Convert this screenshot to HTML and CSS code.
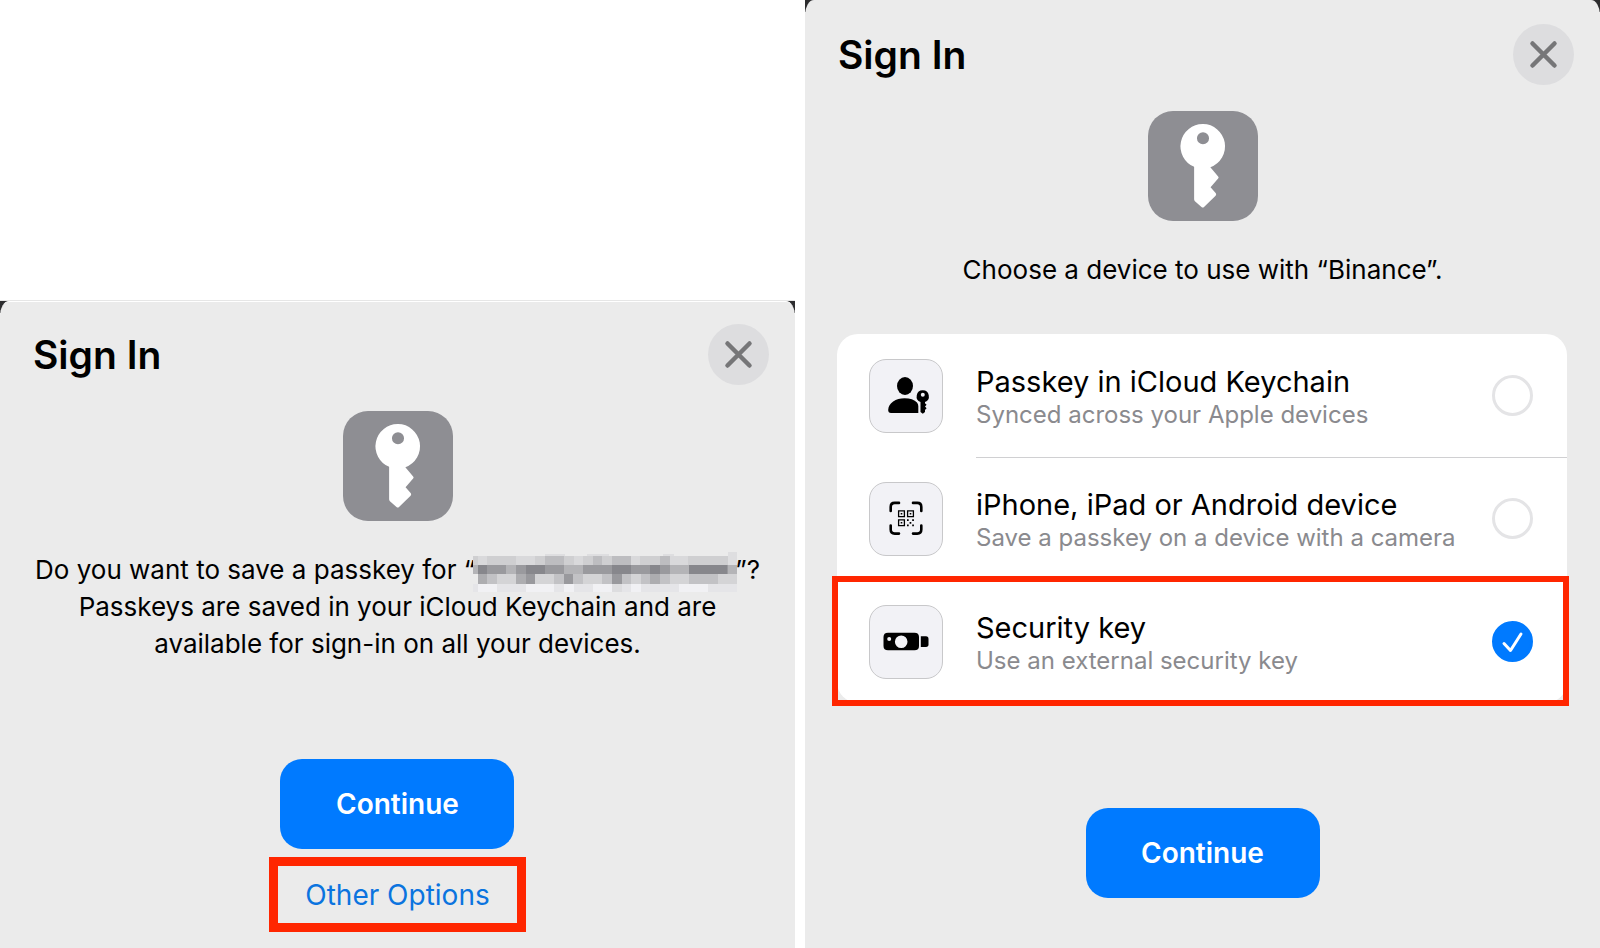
FILE: index.html
```html
<!DOCTYPE html>
<html lang="en">
<head>
<meta charset="utf-8">
<title>Sign In</title>
<link rel="stylesheet" href="styles.css">
</head>
<body>
<svg class="defs" aria-hidden="true">
  <symbol id="key" viewBox="0 0 109 109">
    <path fill-rule="evenodd" stroke-linejoin="round" d="M54.5 13a22 22 0 0 1 7.3 42.7L69.5 65Q70.5 66 69.5 67L62 75.5L67.2 81.5Q68 82.7 67 84L55.5 95.2Q54.3 96.2 53 95.2L46.5 89.5Q45.7 88.6 45.7 87.5V55.3A22 22 0 0 1 54.5 13ZM54.5 21a6 6 0 1 0 0 12a6 6 0 0 0 0-12Z"/>
  </symbol>
  <symbol id="close" viewBox="0 0 61 61">
    <path d="M19.500 19.500L41.500 41.500M41.500 19.500L19.500 41.500" fill="none" stroke="currentColor" stroke-width="4.500" stroke-linecap="round"/>
  </symbol>
</svg>
<main class="page">
  <section class="screen screen-save">
    <div class="sheet">
      <header class="sheet-header">
        <h1>Sign In</h1>
        <button class="close" type="button" aria-label="Close"><svg><use href="#close"/></svg></button>
      </header>
      <div class="key-tile"><svg><use href="#key"/></svg></div>
      <p class="message">Do you want to save a passkey for “<svg class="mosaic" viewBox="0 0 264 40" role="img" aria-label="Hidden account" shape-rendering="crispEdges">
        <path fill="#cfcfd1" d="M0 4H264V13H0Z"/>
        <path fill="#d9d9db" d="M5 4h9v9H5zM43 4h19v9H43zM101 4h9v9h-9zM158 4h9v9h-9zM197 4h18v9h-18z"/>
        <path fill="#bdbdc0" d="M72 4h9v9h-9zM81 4h10v9H81zM120 4h9v9h-9zM139 4h19v9h-19zM187 4h10v9h-10z"/>
        <path fill="#dedee0" d="M72 2h20v2H72zM114 2h22v2h-22zM190 2h11v2h-11zM255 0h9v13h-9z"/>
        <path fill="#9a9a9e" d="M0 13H264V22H0Z"/>
        <path fill="#87878c" d="M5 13h9v9H5zM53 13h19v9H53zM139 13h19v9h-19zM177 13h10v9h-10zM216 13h38v9h-38z"/>
        <path fill="#b4b4b7" d="M0 13h5v9H0zM33 13h10v9H33zM91 13h19v9H91zM197 13h19v9h-19zM255 13h9v9h-9z"/>
        <path fill="#c2c2c5" d="M5 22H255V32H5Z"/>
        <path fill="#d4d4d6" d="M24 22h19v10H24zM62 22h19v10H62zM110 22h19v10h-19zM158 22h10v10h-10zM197 22h19v10h-19zM245 22h19v10h-19z"/>
        <path fill="#99999d" d="M53 22h9v10h-9zM91 22h9v10h-9zM139 22h10v10h-10z"/>
        <path fill="#adadb0" d="M5 22h9v10H5zM43 22h10v10H43zM177 22h10v10h-10z"/>
        <path fill="#e5e5e8" d="M0 32H264V40H0Z"/>
        <path fill="#f1f1f4" d="M5 32h19v8H5zM53 32h28v8H53zM91 32h10v8H91zM120 32h19v8h-19zM158 32h10v8h-10zM206 32h29v8h-29z"/>
        <path fill="#dddddf" d="M139 32h10v8h-10z"/>
      </svg>”?<br>Passkeys are saved in your iCloud Keychain and are<br>available for sign-in on all your devices.</p>
      <div class="actions">
        <button class="primary" type="button">Continue</button>
        <div class="callout callout-link"><button class="link" type="button">Other Options</button></div>
      </div>
    </div>
  </section>

  <section class="screen screen-choose">
    <form class="sheet">
      <header class="sheet-header">
        <h1>Sign In</h1>
        <button class="close" type="button" aria-label="Close"><svg><use href="#close"/></svg></button>
      </header>
      <div class="key-tile"><svg><use href="#key"/></svg></div>
      <p class="message">Choose a device to use with “Binance”.</p>
      <div class="options">
        <label class="option">
          <span class="option-icon"><svg viewBox="0 0 74 74">
            <ellipse cx="36" cy="27" rx="8" ry="9"/>
            <path d="M19.2 51C19.2 44 27 39.3 35.5 39.3C41 39.3 45.500 40.800 48 43.500Q49.300 45 49.300 47V54H22Q19.200 54 19.200 51Z"/>
            <path fill-rule="evenodd" d="M53.800 31.300a6 6 0 0 1 2.200 11.600V44.200L57.600 45.700L56 47.500L57.600 49.200L56 51V53L53.800 54.800L51.500 53V42.900A6 6 0 0 1 53.800 31.300ZM53.800 33.700a2 2 0 1 0 0 4a2 2 0 0 0 0-4Z"/>
          </svg></span>
          <span class="option-text"><span class="option-title">Passkey in iCloud Keychain</span><span class="option-note">Synced across your Apple devices</span></span>
          <span class="radio"><input type="radio" name="device"></span>
        </label>
        <label class="option">
          <span class="option-icon"><svg viewBox="0 0 74 74">
            <path fill="none" stroke="#000" stroke-width="2.600" stroke-linecap="round" d="M21.700 29V24.900Q21.700 20.900 25.700 20.900H30M44 20.900H48.300Q52.300 20.900 52.300 24.900V29M52.300 43.500V47.600Q52.300 51.600 48.300 51.600H44M30 51.600H25.700Q21.700 51.600 21.700 47.600V43.500"/>
            <path fill="none" stroke="#000" stroke-width="1.300" d="M29.600 28.900h5.800v5.800h-5.800zM38.600 28.900h5.800v5.800h-5.800zM29.600 37.900h5.800v5.800h-5.800z"/>
            <path d="M31.700 31h1.600v1.600h-1.600zM40.700 31h1.600v1.600h-1.600zM31.700 40h1.600v1.600h-1.600zM38 37.300h1.700v1.700H38zM43.200 37.300h1.700v1.700h-1.700zM40.600 40h1.700v1.700h-1.700zM38 42.600h1.700v1.700H38zM43.200 42.600h1.700v1.700h-1.700z"/>
          </svg></span>
          <span class="option-text"><span class="option-title">iPhone, iPad or Android device</span><span class="option-note">Save a passkey on a device with a camera</span></span>
          <span class="radio"><input type="radio" name="device"></span>
        </label>
        <label class="option">
          <span class="option-icon"><svg viewBox="0 0 74 74">
            <path fill-rule="evenodd" d="M19 27.700H45.500Q50 27.700 50 32V41Q50 45.300 45.500 45.300H19Q14.500 45.300 14.500 41V32Q14.500 27.700 19 27.700ZM32.200 30.400a6.300 6.300 0 1 0 0 12.600a6.300 6.300 0 0 0 0-12.600ZM20.200 32a2 2 0 1 0 0 4a2 2 0 0 0 0-4Z"/>
            <path d="M51.800 31.300H57Q59.500 31.300 59.500 34V39.300Q59.500 42 57 42H51.800Z"/>
          </svg></span>
          <span class="option-text"><span class="option-title">Security key</span><span class="option-note">Use an external security key</span></span>
          <span class="radio"><input type="radio" name="device" checked><svg viewBox="0 0 41 41" aria-hidden="true"><path d="M12 22.500L18.500 29.500L29 13" fill="none" stroke="#fff" stroke-width="3" stroke-linecap="round" stroke-linejoin="round"/></svg></span>
          <span class="callout callout-row"></span>
        </label>
      </div>
      <div class="actions"><button class="primary" type="button">Continue</button></div>
    </form>
  </section>
</main>
</body>
</html>
```
FILE: styles.css
```css
* { box-sizing: border-box; }

body {
  margin: 0;
  background: #fff;
  color: #000;
  font-family: Inter, "Liberation Sans", sans-serif;
}

button {
  padding: 0;
  border: 0;
  background: none;
  font: inherit;
  cursor: pointer;
}

svg { display: block; }

.defs {
  position: absolute;
  width: 0;
  height: 0;
}

.page {
  display: grid;
  grid-template-columns: 1fr 1fr;
  gap: 10px;
  min-height: 100vh;
}

/* The dark strip shows behind the rounded corners of the sheet. */
.screen {
  display: flex;
  background: linear-gradient(#2c2c2e 0 12px, #ebebeb 12px);
}

.screen-save {
  align-self: end;
  border-top: 1px solid #e6e6e6;
}

.sheet {
  flex: 1;
  display: flex;
  flex-direction: column;
  align-items: center;
  padding: 24px 26px 16px 33px;
  border-radius: 9px 9px 0 0 / 15px 15px 0 0;
  background: #ebebeb;
}

.screen-save .sheet {
  border-top: 1px solid #fff;
  padding-top: 22px;
}

.sheet-header {
  align-self: stretch;
  display: flex;
  justify-content: space-between;
  align-items: center;
}

h1 {
  margin: 0;
  font-size: 39px;
  line-height: 60px;
  font-weight: 600;
}

.close {
  width: 61px;
  height: 61px;
  border-radius: 50%;
  background: #dddddf;
  color: #767678;
}

.close svg { width: 61px; height: 61px; }

.key-tile {
  width: 110px;
  height: 110px;
  margin-top: 26px;
  margin-right: 7px;
  border-radius: 25px;
  background: #8e8e93;
  fill: #fff;
}

.key-tile svg { width: 110px; height: 110px; }

.message {
  margin: 30px 0 0;
  padding-right: 7px;
  font-size: 26px;
  line-height: 37px;
  text-align: center;
}

.mosaic {
  display: inline-block;
  width: 264px;
  height: 40px;
  margin: -10px -2px;
  vertical-align: middle;
}

.options {
  align-self: stretch;
  margin: 46px 7px 0 -1px;
  border-radius: 21px;
  background: #fff;
}

.option {
  position: relative;
  display: flex;
  align-items: center;
  height: 123px;
  padding: 0 34px 0 32px;
}

.option + .option::before {
  content: "";
  position: absolute;
  top: 0;
  left: 139px;
  right: 0;
  height: 1px;
  background: #d0d0d2;
}

.option-icon {
  width: 74px;
  height: 74px;
  border: 1px solid #c8c8ca;
  border-radius: 17px;
  background: #f2f2f6;
}

.option-icon svg {
  width: 74px;
  height: 74px;
  margin: -1px;
}

.option-text {
  flex: 1;
  display: flex;
  flex-direction: column;
  padding: 1px 0 0 33px;
}

.option-title {
  font-size: 29px;
  line-height: 37px;
}

.option-note {
  color: #8a8a8e;
  font-size: 24px;
  line-height: 29px;
}

.radio { display: grid; }

.radio > * {
  grid-area: 1 / 1;
  width: 41px;
  height: 41px;
}

.radio input {
  appearance: none;
  margin: 0;
  border: 3px solid #e4e4e6;
  border-radius: 50%;
}

.radio input:checked {
  border-color: #007aff;
  background: #007aff;
}

.radio svg { pointer-events: none; }

.callout { border: 0 solid #ff2600; }

.callout-row {
  position: absolute;
  inset: -4px -2px -3px -5px;
  border-width: 6px;
  pointer-events: none;
}

.callout-link {
  margin-top: 8px;
  border-width: 9px;
  padding: 11px 27px 9px;
}

.actions {
  display: flex;
  flex-direction: column;
  align-items: center;
  margin-top: 97px;
  padding-right: 7px;
}

.screen-choose .actions { margin-top: 105px; }

.primary {
  width: 234px;
  height: 90px;
  border-radius: 22px;
  background: #007aff;
  color: #fff;
  font-size: 28px;
  font-weight: 600;
}

.link {
  color: #0b74df;
  font-size: 28px;
  line-height: 37px;
}
```
